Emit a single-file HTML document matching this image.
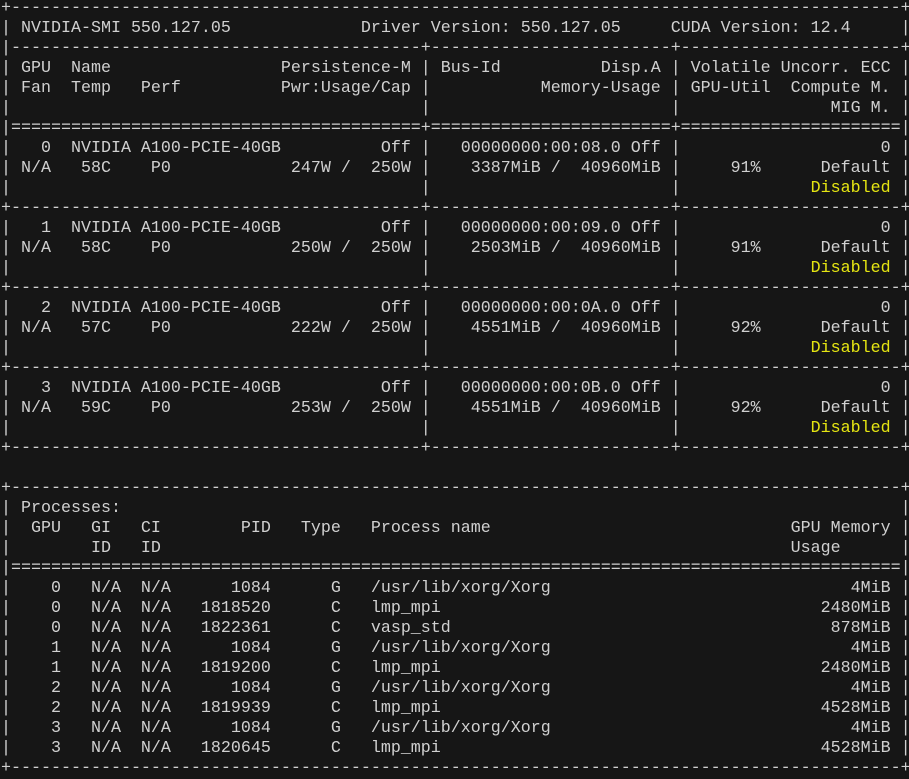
<!DOCTYPE html>
<html><head><meta charset="utf-8"><style>
html,body{margin:0;padding:0;background:#161616;width:909px;height:771px;overflow:hidden}
pre{margin:0;position:absolute;left:1px;top:-1px;font-family:"Liberation Mono","DejaVu Sans Mono",monospace;font-size:16.667px;line-height:20px;color:#d0d0d0;white-space:pre}
.y{color:#e5e512}
</style></head><body><pre>+-----------------------------------------------------------------------------------------+
| NVIDIA-SMI 550.127.05             Driver Version: 550.127.05     CUDA Version: 12.4     |
|-----------------------------------------+------------------------+----------------------+
| GPU  Name                 Persistence-M | Bus-Id          Disp.A | Volatile Uncorr. ECC |
| Fan  Temp   Perf          Pwr:Usage/Cap |           Memory-Usage | GPU-Util  Compute M. |
|                                         |                        |               MIG M. |
|=========================================+========================+======================|
|   0  NVIDIA A100-PCIE-40GB          Off |   00000000:00:08.0 Off |                    0 |
| N/A   58C    P0            247W /  250W |    3387MiB /  40960MiB |     91%      Default |
|                                         |                        |             <span class="y">Disabled</span> |
+-----------------------------------------+------------------------+----------------------+
|   1  NVIDIA A100-PCIE-40GB          Off |   00000000:00:09.0 Off |                    0 |
| N/A   58C    P0            250W /  250W |    2503MiB /  40960MiB |     91%      Default |
|                                         |                        |             <span class="y">Disabled</span> |
+-----------------------------------------+------------------------+----------------------+
|   2  NVIDIA A100-PCIE-40GB          Off |   00000000:00:0A.0 Off |                    0 |
| N/A   57C    P0            222W /  250W |    4551MiB /  40960MiB |     92%      Default |
|                                         |                        |             <span class="y">Disabled</span> |
+-----------------------------------------+------------------------+----------------------+
|   3  NVIDIA A100-PCIE-40GB          Off |   00000000:00:0B.0 Off |                    0 |
| N/A   59C    P0            253W /  250W |    4551MiB /  40960MiB |     92%      Default |
|                                         |                        |             <span class="y">Disabled</span> |
+-----------------------------------------+------------------------+----------------------+

+-----------------------------------------------------------------------------------------+
| Processes:                                                                              |
|  GPU   GI   CI        PID   Type   Process name                              GPU Memory |
|        ID   ID                                                               Usage      |
|=========================================================================================|
|    0   N/A  N/A      1084      G   /usr/lib/xorg/Xorg                              4MiB |
|    0   N/A  N/A   1818520      C   lmp_mpi                                      2480MiB |
|    0   N/A  N/A   1822361      C   vasp_std                                      878MiB |
|    1   N/A  N/A      1084      G   /usr/lib/xorg/Xorg                              4MiB |
|    1   N/A  N/A   1819200      C   lmp_mpi                                      2480MiB |
|    2   N/A  N/A      1084      G   /usr/lib/xorg/Xorg                              4MiB |
|    2   N/A  N/A   1819939      C   lmp_mpi                                      4528MiB |
|    3   N/A  N/A      1084      G   /usr/lib/xorg/Xorg                              4MiB |
|    3   N/A  N/A   1820645      C   lmp_mpi                                      4528MiB |
+-----------------------------------------------------------------------------------------+</pre></body></html>
